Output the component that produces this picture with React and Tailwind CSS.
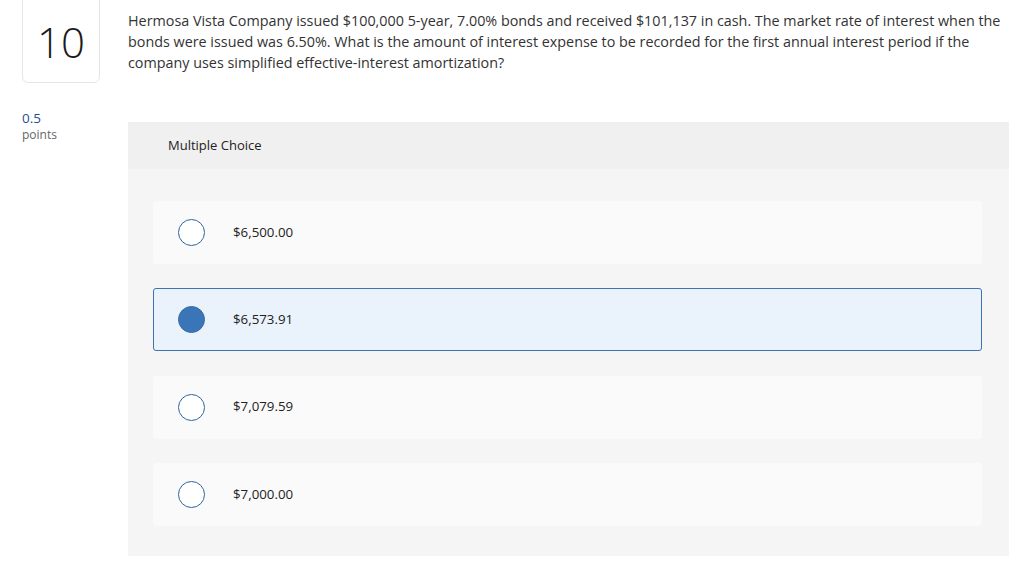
import React, { useState } from 'react';

const choices = ['$6,500.00', '$6,573.91', '$7,079.59', '$7,000.00'];

export default function App() {
    const [selected, setSelected] = useState(1);

    return (
        <div className="w-[1024px] h-[570px] bg-white overflow-hidden flex text-[#2b2b2b]" style={{ fontFamily: '"Open Sans", "Noto Sans", sans-serif' }}>
            {/* left column: number + points */}
            <div className="w-[128px] shrink-0 pl-[22px]">
                <div className="w-[78px] h-[93px] -mt-[10px] border border-[#e6e6e6] rounded-md flex items-center justify-center pt-[10px]">
                    <span className="text-[42px] font-light leading-none text-[#1a1a1a]">10</span>
                </div>
                <div className="mt-[27px] text-[13.5px] leading-[17px] text-[#1e4f8f]">0.5</div>
                <div className="text-[12px] leading-[16px] text-[#666]">points</div>
            </div>

            {/* main */}
            <div className="w-[881px] shrink-0">
                <p className="pt-[10px] text-[14.35px] leading-[21px] text-[#333] whitespace-nowrap">
                    <span className="block">Hermosa Vista Company issued $100,000 5-year, 7.00% bonds and received $101,137 in cash. The market rate of interest when the</span>
                    <span className="block">bonds were issued was 6.50%. What is the amount of interest expense to be recorded for the first annual interest period if the</span>
                    <span className="block">company uses simplified effective-interest amortization?</span>
                </p>

                <div className="mt-[49px] bg-[#f5f5f5]">
                    <div className="h-[47px] bg-[#f0f0f0] flex items-center pl-[40px] text-[13px] text-[#222]">
                        Multiple Choice
                    </div>
                    <div className="pt-[32px] pb-[30px] pl-[25px] pr-[27px] flex flex-col gap-[24.4px]">
                        {choices.map((c, i) => {
                            const on = selected === i;
                            return (
                                <button
                                    key={c}
                                    onClick={() => setSelected(i)}
                                    className={`h-[63px] rounded-[3px] flex items-center text-left pl-[24px] border ${
                                        on ? 'bg-[#eaf2fb] border-[#3d73b5]' : 'bg-[#fafafa] border-[#fafafa]'
                                    }`}
                                >
                                    <span className={`w-[27px] h-[27px] rounded-full border shrink-0 ${
                                        on ? 'bg-[#3a75b8] border-[#3a6aa0]' : 'bg-white border-[#2d64a0]'
                                    }`} />
                                    <span className="ml-[28px] text-[13.3px] text-[#222]">{c}</span>
                                </button>
                            );
                        })}
                    </div>
                </div>
            </div>
        </div>
    );
}
